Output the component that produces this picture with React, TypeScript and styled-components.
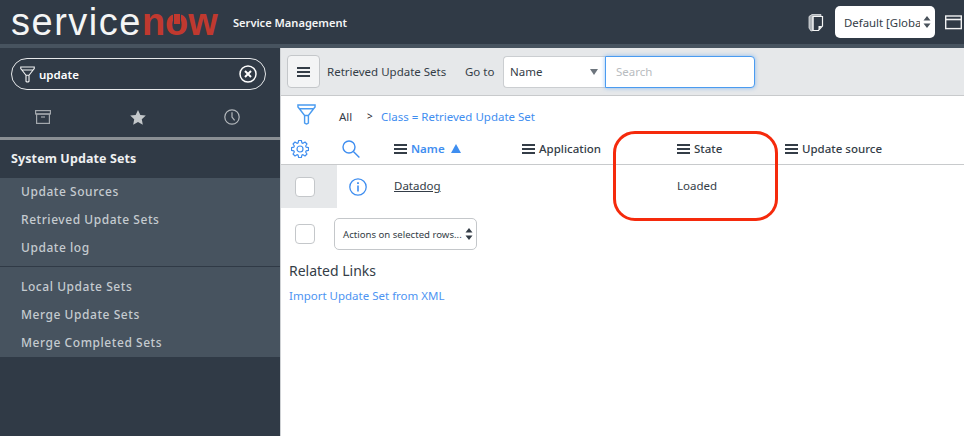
import React from 'react';
import styled, { createGlobalStyle } from 'styled-components';

const Global = createGlobalStyle`
  html, body { margin: 0; padding: 0; }
  body { width: 964px; height: 436px; overflow: hidden; background: #fff; font-family: "Noto Sans", "Open Sans", sans-serif; color: #343d47; }
  * { box-sizing: border-box; }
`;

const Page = styled.div`
  position: relative;
  width: 964px;
  height: 436px;
  display: flex;
  flex-direction: column;
  overflow: hidden;
`;

const Header = styled.header`
  height: 48px;
  flex: none;
  background: #303a46;
  border-bottom: 4px solid #47535f;
  display: flex;
  align-items: center;
  padding: 0 0 0 11px;
`;

const Logo = styled.div`
  font-family: "Liberation Sans", Arial, sans-serif;
  font-size: 38px;
  line-height: 44px;
  letter-spacing: 1.5px;
  color: #f4f5f5;
  width: 222px;
`;

const LogoNow = styled.span`
  color: #c0392f;
  font-weight: 700;
  letter-spacing: 0;
`;

// the power-button notch on top of the "o"
const LogoO = styled.span`
  position: relative;

  &::after {
    content: '';
    position: absolute;
    left: 8px;
    top: 13px;
    width: 5.5px;
    height: 10px;
    background: #c0392f;
    border: solid #303a46;
    border-width: 0 1.5px 1.5px;
    box-sizing: content-box;
  }
`;

const Product = styled.div`
  font-size: 11.1px;
  font-weight: 600;
  color: #f4f5f5;
`;

const HeaderRight = styled.div`
  margin-left: auto;
  display: flex;
  align-items: center;
  gap: 11px;
  margin-right: 2px;
`;

const Scope = styled.div`
  width: 100px;
  height: 32px;
  margin-right: -1px;
  background: #fff;
  border-radius: 5px;
  display: flex;
  align-items: center;
  justify-content: space-between;
  padding: 0 4px 0 9px;
  font-size: 11.4px;
  color: #343d47;
  white-space: nowrap;
  overflow: hidden;
`;

const ScopeText = styled.span`
  width: 76px;
  overflow: hidden;
`;

const Body = styled.div`
  flex: 1;
  display: flex;
  min-height: 0;
`;

const Sidebar = styled.aside`
  width: 281px;
  flex: none;
  background: #303a46;
  border-right: 1px solid #cfd2d5;
`;

const SearchPill = styled.div`
  margin: 10px 14px 0 11px;
  height: 32px;
  border: 1px solid #e6e8ea;
  border-radius: 16px;
  display: flex;
  align-items: center;
  padding: 0 8px 0 8px;
  gap: 4px;
  color: #fff;
  font-size: 11.5px;
  font-weight: 600;
`;

const PillText = styled.span`
  flex: 1;
`;

const TabRow = styled.div`
  height: 50px;
  display: grid;
  grid-template-columns: 86px 104px 84px;
  align-items: center;
  justify-items: center;
  border-bottom: 3px solid #8a8f94;
  padding-top: 7px;
`;

const SectionTitle = styled.div`
  height: 38px;
  display: flex;
  align-items: center;
  padding: 0 0 2px 11px;
  font-size: 12.5px;
  font-weight: 700;
  letter-spacing: 0.1px;
  color: #eef0f1;
`;

const MenuGroup = styled.div<{ $first?: boolean }>`
  background: #47535f;
  padding-top: ${p => (p.$first ? 0 : 6)}px;
  height: ${p => (p.$first ? 89 : 91)}px;
  border-bottom: 1px solid #303a46;
`;

const MenuItem = styled.div`
  height: 28px;
  padding: 0 0 2px 21px;
  display: flex;
  align-items: center;
  font-size: 12px;
  font-weight: 500;
  letter-spacing: 0.55px;
  color: #c5cbd0;
`;

const Main = styled.main`
  flex: 1;
  min-width: 0;
  background: #fff;
`;

const Toolbar = styled.div`
  height: 48px;
  background: #e6e8ea;
  border-bottom: 1px solid #c8cacc;
  display: flex;
  align-items: center;
  padding: 0 0 0 6px;
`;

const MenuButton = styled.div`
  width: 33px;
  height: 33px;
  border: 1px solid #c4c7ca;
  border-radius: 4px;
  background: #f3f4f5;
  display: flex;
  align-items: center;
  justify-content: center;
  margin-right: 7px;
`;

const ListTitle = styled.div`
  font-size: 11.5px;
  width: 138px;
  color: #343d47;
`;

const GoTo = styled.div`
  font-size: 11.5px;
  width: 38px;
  color: #343d47;
`;

const NameSelect = styled.div`
  width: 102px;
  height: 32px;
  background: #fff;
  border: 1px solid #cbced1;
  border-right: 0;
  border-radius: 4px 0 0 4px;
  display: flex;
  align-items: center;
  justify-content: space-between;
  padding: 0 7px 0 6px;
  font-size: 11.5px;
  color: #343d47;
`;

const Caret = styled.span`
  width: 0;
  height: 0;
  border-left: 4px solid transparent;
  border-right: 4px solid transparent;
  border-top: 6px solid #6d757d;
`;

const SearchBox = styled.div`
  width: 150px;
  height: 32px;
  background: #fff;
  border: 1px solid #4a9bf0;
  border-radius: 0 4px 4px 0;
  box-shadow: 0 0 4px rgba(74, 155, 240, 0.6);
  display: flex;
  align-items: center;
  padding-left: 10px;
  font-size: 11.5px;
  color: #b8bcc0;
`;

const FilterRow = styled.div`
  height: 37px;
  display: flex;
  align-items: center;
  padding: 3px 0 0 16px;
  font-size: 11.5px;
`;

const FilterIcon = styled.span`
  display: flex;
  margin-top: -4px;
`;

const All = styled.span`
  margin-left: 23px;
  width: 28px;
  color: #343d47;
`;

const Sep = styled.span`
  width: 14px;
  font-size: 10px;
  color: #1f252b;
`;

const Crumb = styled.span`
  color: #3f8ef0;
`;

const cols = '56px 57px 128px 155px 108px 1fr';

const HeadRow = styled.div`
  height: 32px;
  display: grid;
  grid-template-columns: ${cols};
  align-items: center;
  border-bottom: 1px solid #c8cacc;
`;

const IconCell = styled.div<{ $pad: number }>`
  display: flex;
  align-items: center;
  padding-left: ${p => p.$pad}px;
`;

const HeadCell = styled.div<{ $active?: boolean }>`
  display: flex;
  align-items: center;
  gap: 4px;
  font-size: 11.5px;
  font-weight: ${p => (p.$active ? 600 : 500)};
  color: ${p => (p.$active ? '#3f8ef0' : '#343d47')};
`;

const DataRow = styled.div`
  height: 43px;
  display: grid;
  grid-template-columns: ${cols};
  align-items: center;
  font-size: 11.5px;
`;

const CheckCell = styled.div`
  height: 100%;
  background: #e6e8ea;
  display: flex;
  align-items: center;
  padding-left: 14px;
`;

const Check = styled.div`
  width: 20px;
  height: 20px;
  background: #fff;
  border: 1px solid #c4c7ca;
  border-radius: 4px;
`;

const RowText = styled.div`
  padding-bottom: 2px;
`;

const RowLink = styled.span`
  text-decoration: underline;
  color: #343d47;
`;

const Actions = styled.div`
  margin-top: 10px;
  height: 32px;
  display: flex;
  align-items: center;
  padding-left: 14px;
  gap: 19px;
`;

const ActionSelect = styled.div`
  width: 143px;
  height: 32px;
  border: 1px solid #c4c7ca;
  border-radius: 5px;
  display: flex;
  align-items: center;
  justify-content: space-between;
  padding: 0 3px 0 8px;
  font-size: 9.6px;
  color: #343d47;
  white-space: nowrap;
`;

const Related = styled.div`
  margin: 11px 0 0 8px;
  font-size: 14px;
  line-height: 20px;
  color: #343d47;
`;

const RelatedLink = styled.div`
  margin: 7px 0 0 8px;
  font-size: 11.5px;
  line-height: 16px;
  color: #4d94f2;
`;

const Callout = styled.div`
  position: absolute;
  left: 613px;
  top: 131px;
  width: 165px;
  height: 90px;
  border: 3px solid #f52a0c;
  border-radius: 22px;
  pointer-events: none;
`;

const Burger = ({ color = '#343d47' }: { color?: string }) => (
  <svg width={13} height={10} viewBox="0 0 13 10">
    <path d="M0 1h13M0 5h13M0 9h13" stroke={color} strokeWidth="2" fill="none" />
  </svg>
);

const Updown = ({ color = '#343d47' }: { color?: string }) => (
  <svg width="8" height="12" viewBox="0 0 8 12">
    <path d="M4 0l3.5 4.5h-7zM4 12L.5 7.5h7z" fill={color} />
  </svg>
);

const Funnel = ({ color, size }: { color: string; size: number }) => (
  <svg width={size} height={size + 2} viewBox="0 0 20 22" fill="none" stroke={color} strokeWidth="1.5">
    <path d="M1 1h18v2l-1.5 2h-15L1 3zM2.5 5L8 12h4l5.5-7M8 12v8q2 2 4 0v-8" />
  </svg>
);

// 8 tooth gear outline
const gearPath = (() => {
  const pts: string[] = [];
  for (let i = 0; i < 8; i++) {
    const a = (i * Math.PI) / 4;
    [[-0.3, 6.4], [-0.16, 8.6], [0.16, 8.6], [0.3, 6.4]].forEach(([o, r]) => {
      pts.push(`${(9 + r * Math.sin(a + o)).toFixed(2)} ${(9 - r * Math.cos(a + o)).toFixed(2)}`);
    });
  }
  return `M${pts.join('L')}Z`;
})();

export default function App() {
  return (
    <Page>
      <Global />
      <Header>
        <Logo>service<LogoNow>n<LogoO>o</LogoO>w</LogoNow></Logo>
        <Product>Service Management</Product>
        <HeaderRight>
          <svg width="16" height="19" viewBox="0 0 16 19" fill="none">
            <path d="M1 3.5L4 1.5h9v2H5v14l-2 .5-2-3z" fill="#aeb3b8" stroke="#dfe2e4" strokeWidth="0.8" />
            <path d="M5 3.5h9.5V13l-4 4.5H5z" stroke="#f4f5f5" strokeWidth="1.2" />
            <path d="M14 13h-3.5v4z" fill="#f4f5f5" />
          </svg>
          <Scope><ScopeText>Default [Global]</ScopeText><Updown color="#4a535c" /></Scope>
          <svg width="17" height="15" viewBox="0 0 17 15" fill="none" stroke="#f0f1f2">
            <rect x="0.7" y="1" width="15.6" height="12.6" strokeWidth="1.4" />
            <path d="M1 4.5h15" strokeWidth="1.6" />
          </svg>
        </HeaderRight>
      </Header>
      <Body>
        <Sidebar>
          <SearchPill>
            <Funnel color="#f0f1f2" size={15} />
            <PillText>update</PillText>
            <svg width="18" height="18" viewBox="0 0 18 18" fill="none" stroke="#fff">
              <circle cx="9" cy="9" r="8" strokeWidth="1.5" />
              <path d="M6 6l6 6M12 6l-6 6" strokeWidth="2" />
            </svg>
          </SearchPill>
          <TabRow>
            <svg width="16" height="14" viewBox="0 0 16 14" fill="none" stroke="#a3a8ad" strokeWidth="1.2">
              <rect x="0.6" y="0.6" width="14.8" height="3.4" />
              <rect x="1.6" y="4" width="12.8" height="9.4" />
              <path d="M6 7h4" />
            </svg>
            <svg width="16" height="15" viewBox="0 0 24 23" fill="#c3c7ca">
              <path d="M12 0l3.6 7.6 8.4 1-6.2 5.7 1.6 8.3L12 18.5l-7.4 4.1 1.6-8.3L0 8.6l8.4-1z" />
            </svg>
            <svg width="16" height="16" viewBox="0 0 16 16" fill="none" stroke="#b4b8bc" strokeWidth="1.2">
              <circle cx="8" cy="8" r="7.2" />
              <path d="M8 3.2V8l2.6 3.4" />
            </svg>
          </TabRow>
          <SectionTitle>System Update Sets</SectionTitle>
          <MenuGroup $first>
            <MenuItem>Update Sources</MenuItem>
            <MenuItem>Retrieved Update Sets</MenuItem>
            <MenuItem>Update log</MenuItem>
          </MenuGroup>
          <MenuGroup>
            <MenuItem>Local Update Sets</MenuItem>
            <MenuItem>Merge Update Sets</MenuItem>
            <MenuItem>Merge Completed Sets</MenuItem>
          </MenuGroup>
        </Sidebar>
        <Main>
          <Toolbar>
            <MenuButton><Burger /></MenuButton>
            <ListTitle>Retrieved Update Sets</ListTitle>
            <GoTo>Go to</GoTo>
            <NameSelect>Name<Caret /></NameSelect>
            <SearchBox>Search</SearchBox>
          </Toolbar>
          <FilterRow>
            <FilterIcon><Funnel color="#4a9bf0" size={19} /></FilterIcon>
            <All>All</All>
            <Sep>&gt;</Sep>
            <Crumb>Class = Retrieved Update Set</Crumb>
          </FilterRow>
          <HeadRow>
            <IconCell $pad={10}>
              <svg width="18" height="18" viewBox="0 0 18 18" fill="none" stroke="#3f8ef0" strokeWidth="1.2">
                <path d={gearPath} strokeLinejoin="round" />
                <circle cx="9" cy="9" r="3" />
              </svg>
            </IconCell>
            <IconCell $pad={5}>
              <svg width="18" height="18" viewBox="0 0 18 18" fill="none" stroke="#3f8ef0" strokeWidth="1.4">
                <circle cx="7" cy="7" r="6" />
                <path d="M11.4 11.4l6 6" />
              </svg>
            </IconCell>
            <HeadCell $active>
              <Burger />
              Name
              <svg width="10" height="9" viewBox="0 0 10 9" style={{ marginLeft: 2 }}>
                <path d="M5 0l5 9H0z" fill="#3f8ef0" />
              </svg>
            </HeadCell>
            <HeadCell><Burger />Application</HeadCell>
            <HeadCell><Burger />State</HeadCell>
            <HeadCell><Burger />Update source</HeadCell>
          </HeadRow>
          <DataRow>
            <CheckCell><Check /></CheckCell>
            <IconCell $pad={12}>
              <svg width="18" height="18" viewBox="0 0 18 18" fill="none" stroke="#3f8ef0" strokeWidth="1.3">
                <circle cx="9" cy="9" r="8.2" />
                <path d="M9 7.5v6" strokeWidth="1.6" />
                <path d="M9 4.2v1.8" strokeWidth="1.8" />
              </svg>
            </IconCell>
            <RowText><RowLink>Datadog</RowLink></RowText>
            <div />
            <RowText>Loaded</RowText>
            <div />
          </DataRow>
          <Actions>
            <Check />
            <ActionSelect>Actions on selected rows...<Updown /></ActionSelect>
          </Actions>
          <Related>Related Links</Related>
          <RelatedLink>Import Update Set from XML</RelatedLink>
        </Main>
      </Body>
      <Callout />
    </Page>
  );
}
